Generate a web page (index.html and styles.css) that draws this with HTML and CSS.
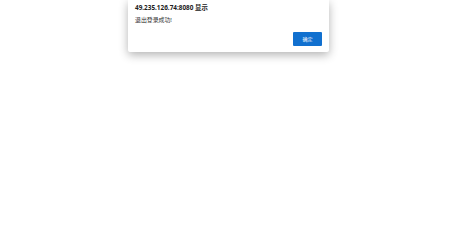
FILE: index.html
```html
<!DOCTYPE html>
<html lang="zh-CN">
<head>
<meta charset="utf-8">
<title>提示</title>
<link rel="stylesheet" href="styles.css">
</head>
<body>
<div class="dialog">
  <div class="title">49.235.126.74:8080 显示</div>
  <div class="message">退出登录成功!</div>
  <div class="actions"><button class="ok">确定</button></div>
</div>
</body>
</html>
```

FILE: styles.css
```css
html, body {
  margin: 0;
  padding: 0;
  background: #ffffff;
}
body {
  font-family: "Noto Sans", "Noto Sans CJK SC", sans-serif;
  width: 474px;
  height: 223px;
  overflow: hidden;
}
.dialog {
  margin-left: 128px;
  width: 201px;
  height: 52px;
  box-sizing: border-box;
  padding: 4px 7px 0 7px;
  background: #ffffff;
  box-shadow: 0 3px 10px rgba(0, 0, 0, 0.3);
  border-radius: 0 0 2px 2px;
  display: flex;
  flex-direction: column;
}
.title {
  font-size: 6.4px;
  font-weight: bold;
  color: #202020;
  line-height: 8px;
  white-space: nowrap;
}
.message {
  margin-top: 4px;
  font-size: 5.9px;
  color: #303030;
  line-height: 8px;
  white-space: nowrap;
}
.actions {
  display: flex;
  justify-content: flex-end;
  margin-top: 8px;
}
.ok {
  width: 29px;
  height: 14px;
  padding: 0;
  border: none;
  border-radius: 1px;
  background: #1170cf;
  color: #ffffff;
  font-family: "Noto Sans CJK SC", sans-serif;
  font-size: 5px;
  line-height: 14px;
}
```
